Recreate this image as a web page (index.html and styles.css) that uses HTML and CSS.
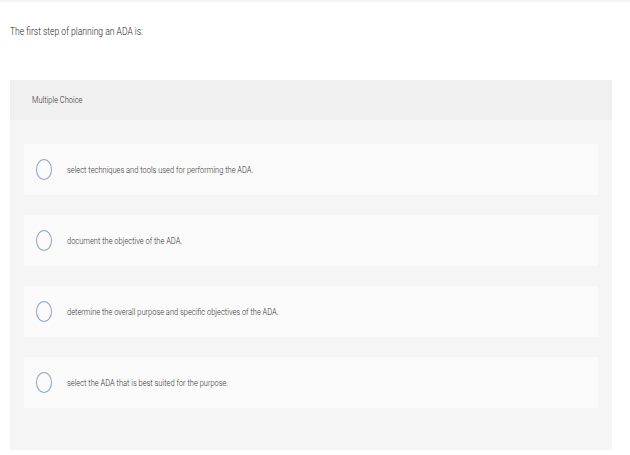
FILE: index.html
```html
<!DOCTYPE html>
<html>
<head>
<meta charset="utf-8">
<link rel="stylesheet" href="styles.css">
</head>
<body>
<div class="topbar"></div>
<p class="question"><span class="txt">The first step of planning an ADA is:</span></p>
<div class="panel">
  <div class="panel-head"><span class="txt">Multiple Choice</span></div>
  <div class="panel-body">
    <div class="option"><span class="radio"></span><span class="label txt">select techniques and tools used for performing the ADA.</span></div>
    <div class="option"><span class="radio"></span><span class="label txt">document the objective of the ADA.</span></div>
    <div class="option"><span class="radio"></span><span class="label txt">determine the overall purpose and specific objectives of the ADA.</span></div>
    <div class="option"><span class="radio"></span><span class="label txt">select the ADA that is best suited for the purpose.</span></div>
  </div>
</div>
</body>
</html>
```
FILE: styles.css
```css
html, body {
  margin: 0;
  padding: 0;
  background: #ffffff;
}
body {
  width: 630px;
  height: 455px;
  overflow: hidden;
  font-family: "Roboto", "Liberation Sans", sans-serif;
  font-weight: 300;
  color: #333333;
}
.txt {
  display: inline-block;
  transform: scaleX(0.88);
  transform-origin: left center;
  white-space: nowrap;
}
.topbar {
  height: 2px;
  background: #f4f4f4;
}
.question {
  margin: 0;
  padding: 23px 0 0 10px;
  height: 55px;
  font-size: 10.5px;
  line-height: 14px;
  color: #1e1e1e;
}
.question .txt {
  transform: scaleX(0.815);
}
.panel {
  margin-left: 10px;
  width: 602px;
  background: #f5f5f5;
}
.panel-head {
  height: 40px;
  background: #f0f0f0;
  display: flex;
  align-items: center;
  padding-left: 22px;
  font-size: 8.5px;
  color: #2e2e2e;
}
.panel-body {
  display: flex;
  flex-direction: column;
  gap: 20px;
  padding: 24px 14px 42px 14px;
}
.option {
  height: 51px;
  background: #fafafa;
  display: flex;
  align-items: center;
  padding-left: 12px;
}
.radio {
  width: 14px;
  height: 19px;
  border: 1px solid #8aa3c0;
  border-radius: 50%;
  box-sizing: content-box;
  flex: none;
}
.label {
  margin-left: 15px;
  font-size: 8.5px;
  color: #333333;
}
```
